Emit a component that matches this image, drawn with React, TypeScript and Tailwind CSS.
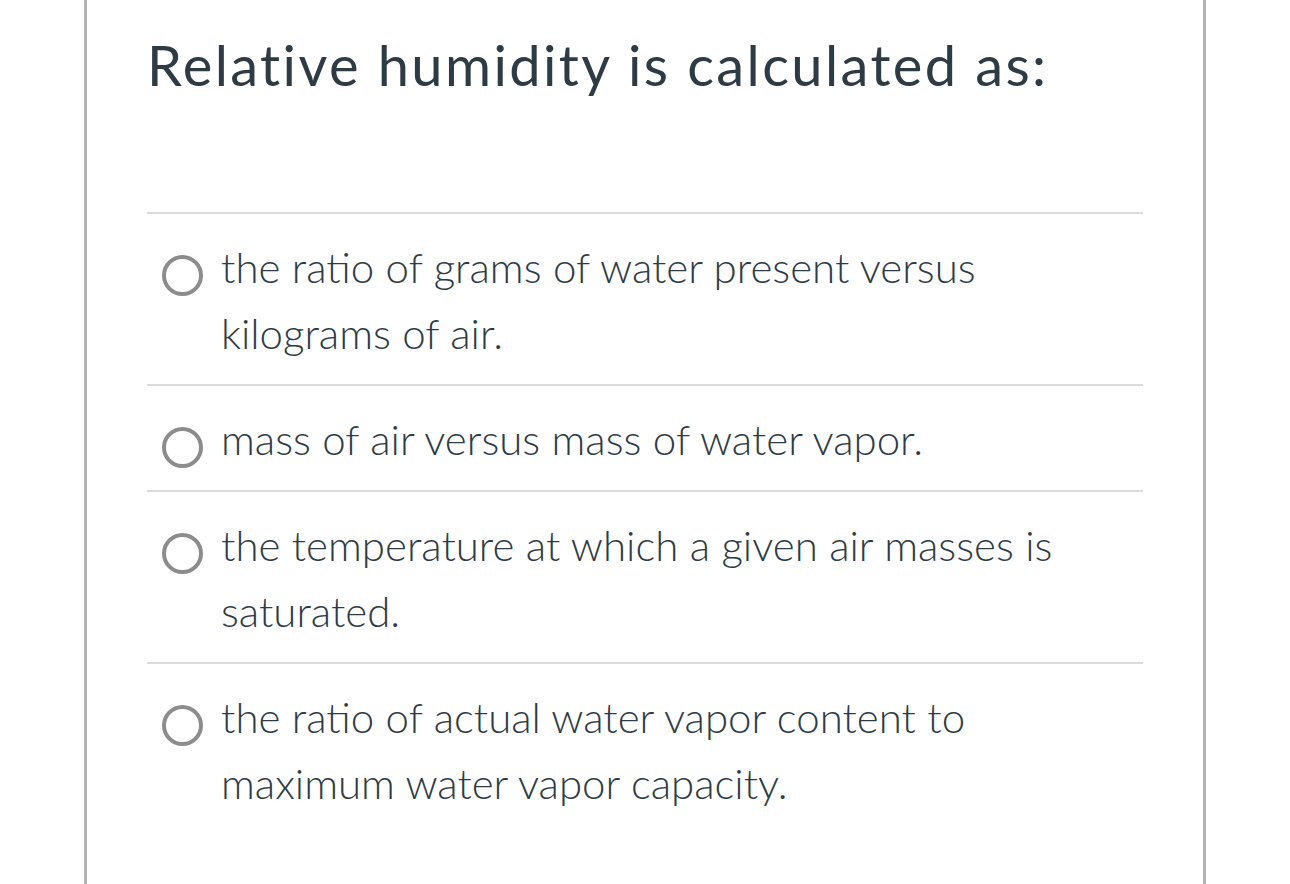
import React from "react";

const options = [
  "the ratio of grams of water present versus kilograms of air.",
  "mass of air versus mass of water vapor.",
  "the temperature at which a given air masses is saturated.",
  "the ratio of actual water vapor content to maximum water vapor capacity.",
];

export default function App() {
  return (
    <div
      className="w-[1290px] h-[884px] bg-white overflow-hidden"
      style={{ fontFamily: "Lato, 'Noto Sans', sans-serif" }}
    >
      <div className="ml-[84px] w-[1122px] h-[884px] border-x-[3px] border-[#b3b3b3] pl-[60px] pr-[60px]">
        <h1 className="pt-[27px] text-[56px] leading-[76px] text-[#2d3b45] font-normal tracking-[2.4px]">
          Relative humidity is calculated as:
        </h1>
        <div className="mt-[109px] border-t-2 border-[#dcdcdc]">
          {options.map((o, i) => (
            <div key={i} className={"flex items-start pt-[20px] pb-[18px] pr-[40px] " + (i < options.length - 1 ? "border-b-2 border-[#dcdcdc]" : "")}>
              <div className="w-[74px] shrink-0 flex pl-[15px] pt-[21px]">
                <div className="w-[41px] h-[41px] rounded-full border-[4px] border-[#8c8c8c]" />
              </div>
              <div className="text-[42px] leading-[66px] text-[#2d3b45] font-light">{o}</div>
            </div>
          ))}
        </div>
      </div>
    </div>
  );
}
